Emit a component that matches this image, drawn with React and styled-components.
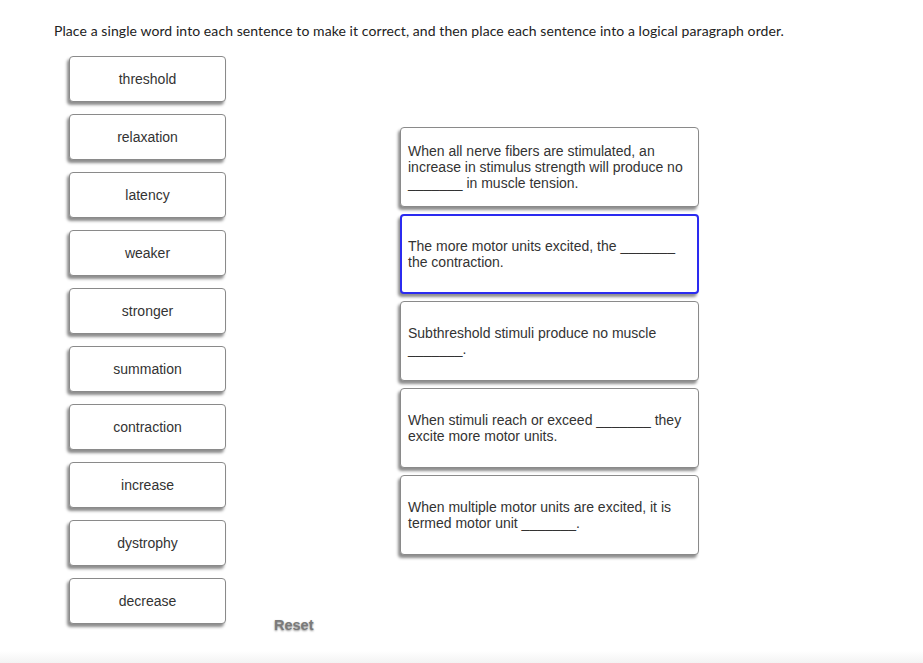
import styled, { createGlobalStyle } from "styled-components";

const GlobalStyle = createGlobalStyle`
  html, body {
    margin: 0;
    padding: 0;
    background: #fff;
  }
  body {
    font-family: "Liberation Sans", Arial, sans-serif;
  }
`;

const words = [
  "threshold",
  "relaxation",
  "latency",
  "weaker",
  "stronger",
  "summation",
  "contraction",
  "increase",
  "dystrophy",
  "decrease",
];

const sentences = [
  { text: "When all nerve fibers are stimulated, an increase in stimulus strength will produce no _______ in muscle tension." },
  { text: "The more motor units excited, the _______ the contraction.", active: true },
  { text: "Subthreshold stimuli produce no muscle _______." },
  { text: "When stimuli reach or exceed _______ they excite more motor units." },
  { text: "When multiple motor units are excited, it is termed motor unit _______." },
];

// page wrapper, keeps the grey strip at the very bottom
const Page = styled.div`
  min-height: 100vh;
  display: flex;
  flex-direction: column;
`;

const Content = styled.div`
  flex: 1;
  padding-left: 54px;
`;

const Prompt = styled.p`
  margin: 22px 0 0;
  font-family: Lato, "Open Sans", sans-serif;
  font-size: 14px;
  letter-spacing: 0.08px;
  line-height: 18px;
  color: #222;
`;

const Board = styled.div`
  display: grid;
  grid-template-columns: 157px 174px 299px;
  margin: 16px 0 0 15px;
`;

const WordList = styled.div`
  display: flex;
  flex-direction: column;
  gap: 12px;
`;

const WordTile = styled.div`
  height: 44px;
  border: 1px solid #8a8a8a;
  border-radius: 4px;
  background: #fff;
  box-shadow: -2px 3px 3px rgba(0, 0, 0, 0.45);
  display: flex;
  align-items: center;
  justify-content: center;
  font-size: 14px;
  color: #333;
`;

const Middle = styled.div`
  display: flex;
  flex-direction: column;
  justify-content: flex-end;
  padding-left: 48px;
`;

const ResetButton = styled.button`
  align-self: flex-start;
  margin-bottom: -9px;
  padding: 0;
  border: none;
  background: none;
  font-family: "Liberation Sans", Arial, sans-serif;
  font-weight: bold;
  font-size: 14.5px;
  color: #7a7a7a;
  text-shadow: 0 1px 2px rgba(0, 0, 0, 0.45);
  cursor: pointer;
`;

const SentenceList = styled.div`
  display: flex;
  flex-direction: column;
  gap: 7px;
  padding-top: 71px;
`;

const SentenceCard = styled.div`
  box-sizing: border-box;
  height: 80px;
  padding: 0 ${(p) => (p.$active ? "6px" : "7px")};
  border: ${(p) => (p.$active ? "2px solid #2b2bf0" : "1px solid #8a8a8a")};
  border-radius: 4px;
  background: #fff;
  box-shadow: -2px 3px 3px rgba(0, 0, 0, 0.45);
  display: flex;
  align-items: center;
  font-size: 14px;
  line-height: 16px;
  color: #333;
`;

const BottomStrip = styled.div`
  height: 12px;
  background: linear-gradient(#fff, #f3f3f3);
`;

export default function App() {
  return (
    <Page>
      <GlobalStyle />
      <Content>
        <Prompt>
          Place a single word into each sentence to make it correct, and then place each sentence into a logical paragraph order.
        </Prompt>
        <Board>
          <WordList>
            {words.map((w) => (
              <WordTile key={w}>{w}</WordTile>
            ))}
          </WordList>
          <Middle>
            <ResetButton>Reset</ResetButton>
          </Middle>
          <SentenceList>
            {sentences.map((s, i) => (
              <SentenceCard key={i} $active={s.active}>
                <span>{s.text}</span>
              </SentenceCard>
            ))}
          </SentenceList>
        </Board>
      </Content>
      <BottomStrip />
    </Page>
  );
}
